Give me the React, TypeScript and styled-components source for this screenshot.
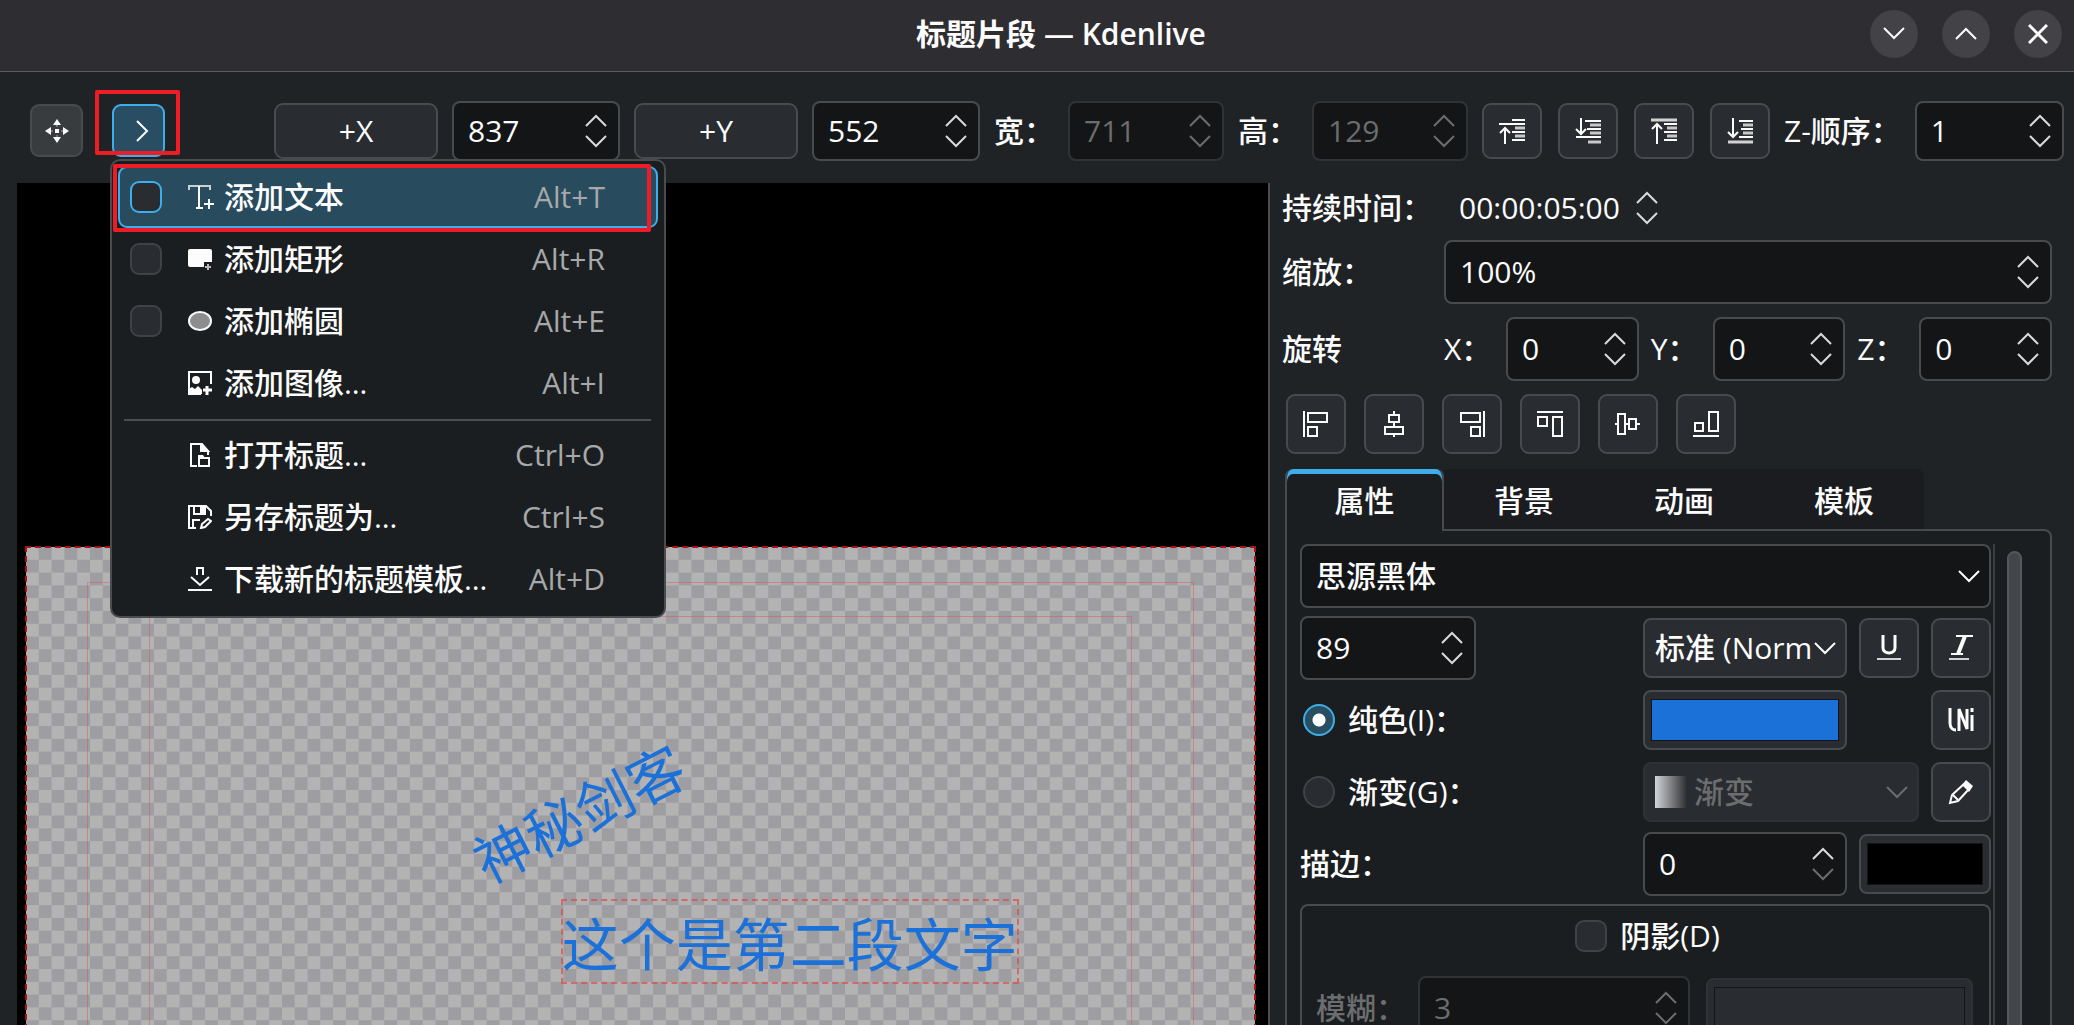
import React from 'react';
import styled, { createGlobalStyle, css } from 'styled-components';

const c = {
  window: '#202326',
  title: '#2e2d32',
  view: '#1b1e20',
  field: '#141517',
  button: '#292c30',
  line: '#484b4e',
  faint: '#303336',
  text: '#fcfcfc',
  dim: '#6b6d6f',
  accent: '#3daee9',
  mark: '#ee1c25',
  ink: '#1c71d8',
};

const GlobalStyle = createGlobalStyle`
  *, *::before, *::after { box-sizing: border-box; }
  body { margin: 0; background: ${c.window}; }
  body, button, input, select {
    font-family: "Open Sans", "Noto Sans CJK SC", sans-serif;
    font-size: 30px;
    line-height: 40px;
    color: ${c.text};
  }
  button, input, select { margin: 0; padding: 0; border: 0; background: none; outline: none; }
`;

/* ---------- window ---------- */

const Window = styled.div`
  display: flex;
  flex-direction: column;
  height: 100vh;
  overflow: hidden;
  background: ${c.window};
`;

const TitleBar = styled.header`
  flex: none;
  display: grid;
  grid-template-columns: 1fr auto 1fr;
  align-items: center;
  height: 72px;
  padding: 0 12px 4px 60px;
  background: ${c.title};
  border-bottom: 1px solid #5c5b60;
`;

const Title = styled.h1`
  grid-column: 2;
  margin: 0;
  font-size: 30px;
  line-height: 40px;
  font-weight: 600;
`;

const WindowButtons = styled.div`
  display: flex;
  justify-content: flex-end;
  gap: 24px;
`;

const RoundButton = styled.button`
  display: grid;
  place-items: center;
  width: 48px;
  height: 48px;
  border-radius: 50%;
  background: #434247;
`;

/* ---------- shared controls ---------- */

const PushButton = styled.button<{ $w?: number; $tall?: boolean }>`
  flex: none;
  display: grid;
  place-items: center;
  width: ${p => (p.$w ? `${p.$w}px` : '100%')};
  height: ${p => (p.$tall ? 60 : 56)}px;
  border: 2px solid ${c.line};
  border-radius: 9px;
  background: ${c.button};
`;

const SpinBox = styled.div<{ $w?: number; $off?: boolean; $short?: boolean }>`
  flex: ${p => (p.$w ? `0 0 ${p.$w}px` : '1 1 0')};
  min-width: 0;
  display: flex;
  align-items: center;
  height: ${p => (p.$short ? 60 : 64)}px;
  padding: 0 11px 0 14px;
  border: 2px solid ${p => (p.$off ? c.faint : c.line)};
  border-radius: 8px;
  background: ${c.field};
  color: ${p => (p.$off ? c.dim : c.text)};
`;

const SpinInput = styled.input`
  flex: 1;
  width: 0;
  min-width: 0;
  height: 40px;
  color: inherit;
  &:disabled { opacity: 1; }
`;

const Steppers = styled.span`
  flex: none;
  display: flex;
  flex-direction: column;
  gap: 8px;
`;

const Step = styled.button<{ $dim?: boolean }>`
  display: block;
  width: 22px;
  height: 13px;
  color: ${p => (p.$dim ? c.dim : '#d9dadb')};
  svg { display: block; }
`;

const Tick = styled.input<{ $hot?: boolean }>`
  appearance: none;
  flex: none;
  width: 32px;
  height: 32px;
  border: 2px solid ${p => (p.$hot ? c.accent : '#404346')};
  border-radius: ${p => (p.type === 'radio' ? '50%' : '9px')};
  background: ${c.button};
  &[type='radio']:checked {
    border-color: ${c.accent};
    background: radial-gradient(circle, #fff 0 6px, #294e62 7px);
  }
`;

const SelectBox = styled.div<{ $dark?: boolean; $off?: boolean; $span?: number }>`
  grid-column: span ${p => p.$span ?? 1};
  display: flex;
  align-items: center;
  height: ${p => (p.$dark ? 64 : 60)}px;
  padding: 0 9px 0 ${p => (p.$dark ? 14 : 10)}px;
  border: 2px solid ${p => (p.$off ? c.faint : c.line)};
  border-radius: 8px;
  background: ${p => (p.$dark ? c.field : c.button)};
  color: ${p => (p.$off ? c.dim : c.text)};
  svg { flex: none; }
`;

const Select = styled.select`
  appearance: none;
  flex: 1;
  width: 0;
  min-width: 0;
  height: 44px;
  color: inherit;
  font-weight: 500;
  &:disabled { opacity: 1; }
`;

const Label = styled.label<{ $w?: number; $off?: boolean }>`
  flex: none;
  width: ${p => (p.$w ? `${p.$w}px` : 'auto')};
  font-weight: 500;
  white-space: nowrap;
  color: ${p => (p.$off ? c.dim : c.text)};
`;

/* ---------- toolbar ---------- */

const Toolbar = styled.div`
  flex: none;
  display: flex;
  align-items: center;
  gap: 14px;
  height: 111px;
  padding: 6px 10px 0 30px;
`;

const ToolGroup = styled.div`
  flex: none;
  display: flex;
  gap: 16px;
`;

const ToolButton = styled.button<{ $active?: boolean }>`
  display: grid;
  place-items: center;
  width: 53px;
  height: 53px;
  border: 2px solid ${p => (p.$active ? c.accent : '#484b4d')};
  border-radius: 9px;
  background: ${p => (p.$active ? '#294e63' : '#393c3f')};
`;

const MenuAnchor = styled.div`
  position: relative;
  flex: none;
  margin: 0 95px 0 15px;
`;

const Highlight = styled.span<{ $inset: string }>`
  position: absolute;
  inset: ${p => p.$inset};
  border: 4px solid ${c.mark};
  border-radius: 2px;
  pointer-events: none;
`;

const Menu = styled.ul`
  position: absolute;
  z-index: 5;
  top: 55px;
  left: -2px;
  width: 556px;
  margin: 0;
  padding: 5px 6px 6px;
  list-style: none;
  border: 2px solid #4a4d50;
  border-radius: 10px;
  background: ${c.view};
`;

const MenuItem = styled.li`
  position: relative;
`;

const itemRow = css<{ $current?: boolean }>`
  display: flex;
  align-items: center;
  width: 100%;
  height: 62px;
  padding: 0 51px 0 10px;
  border: 2px solid ${p => (p.$current ? c.accent : 'transparent')};
  border-radius: 9px;
  background: ${p => (p.$current ? '#284b5e' : 'transparent')};
  text-align: left;
`;
const CheckRow = styled.label<{ $current?: boolean }>`${itemRow}`;
const ActionRow = styled.button<{ $current?: boolean }>`
  ${itemRow}
  padding-left: 42px;
`;

const MenuIcon = styled.span`
  flex: none;
  display: grid;
  width: 24px;
  margin: 0 12px 0 26px;
`;

const MenuText = styled.span`
  flex: 1;
  font-weight: 500;
  white-space: nowrap;
`;

const Shortcut = styled.kbd`
  font-family: inherit;
  color: #a6a8aa;
`;

const Separator = styled.li`
  height: 2px;
  margin: 5px 7px 3px 6px;
  background: #4b4e51;
`;

/* ---------- canvas ---------- */

const Main = styled.main`
  flex: 1;
  min-height: 0;
  display: flex;
  overflow: hidden;
`;

const Stage = styled.section`
  flex: 1;
  min-width: 0;
  margin-left: 17px;
  padding: 364px 13px 0 9px;
  overflow: hidden;
  background: #000;
  border-right: 2px solid #4b4d50;
`;

const Page = styled.div`
  position: relative;
  aspect-ratio: 16 / 9;
  background: repeating-conic-gradient(#9e9da2 0 25%, #b3b3b3 0 50%) 0 0 / calc(100% / 48) calc(100% / 27);
  outline: 2px dashed #a81414;
  outline-offset: -1px;
`;

const SafeArea = styled.div<{ $inset: string }>`
  position: absolute;
  inset: ${p => p.$inset};
  border: 1px solid rgba(214, 90, 90, 0.5);
`;

const TextItem = styled.div<{ $x: string; $y: string; $angle?: number; $selected?: boolean }>`
  position: absolute;
  left: ${p => p.$x};
  top: ${p => p.$y};
  font-family: "Noto Sans CJK SC", sans-serif;
  font-size: 57px;
  line-height: 83px;
  white-space: nowrap;
  color: ${c.ink};
  transform: rotate(${p => p.$angle ?? 0}deg);
  outline: ${p => (p.$selected ? '2px dashed rgba(226, 74, 74, 0.7)' : 'none')};
  outline-offset: -1px;
`;

/* ---------- side panel ---------- */

const Side = styled.aside`
  flex: 0 0 804px;
  display: flex;
  flex-direction: column;
  gap: 13px;
  padding: 0 22px 0 12px;
`;

const Row = styled.div`
  flex: none;
  display: flex;
  align-items: center;
`;

const DurationRow = styled(Row)`
  height: 50px;
  margin-bottom: -6px;
`;

const Timecode = styled.input`
  width: 192px;
  height: 40px;
  padding-left: 15px;
  font-weight: 500;
`;

const Axes = styled.div`
  flex: 1;
  display: grid;
  grid-template-columns: repeat(3, 1fr);
  gap: 12px;
`;

const AlignRow = styled(Row)`
  gap: 18px;
  padding-left: 4px;
`;

const Tabs = styled.div`
  flex: none;
  margin-top: 2px;
  padding-left: 3px;
`;

const TabList = styled.div`
  position: relative;
  display: flex;
  height: 62px;
  margin-bottom: -2px;
`;

const Tab = styled.button<{ $on?: boolean; $last?: boolean }>`
  width: ${p => (p.$on ? 159 : 160)}px;
  height: ${p => (p.$on ? 62 : 60)}px;
  padding-top: ${p => (p.$on ? 2 : 4)}px;
  font-weight: 500;
  background: ${p => (p.$on ? c.view : '#1b1c20')};
  border: solid ${c.line};
  border-width: ${p => (p.$on ? '0 2px 0 2px' : '0')};
  border-radius: ${p => (p.$on ? '8px 8px 0 0' : p.$last ? '0 8px 0 0' : '0')};
  box-shadow: ${p => (p.$on ? `inset 0 5px 0 ${c.accent}` : 'none')};
`;

const TabPanel = styled.div`
  display: flex;
  padding: 13px 28px 0 13px;
  border: 2px solid ${c.line};
  border-radius: 0 8px 8px 8px;
  background: ${c.view};
`;

const Properties = styled.div`
  flex: 1;
  min-width: 0;
  display: flex;
  flex-direction: column;
  gap: 8px;
  padding: 0 2px 24px 0;
  border-right: 2px solid #3c3f42;
`;

const ScrollBar = styled.div`
  width: 15px;
  margin: 7px 0 0 12px;
  border: 2px solid #55585b;
  border-radius: 8px;
  background: #43464a;
`;

const PropRow = styled.div`
  display: grid;
  grid-template-columns: 1fr 204px 60px 60px;
  align-items: center;
  gap: 12px;
  height: 64px;
`;

const Choice = styled.label`
  display: flex;
  align-items: center;
  gap: 13px;
  padding-left: 3px;
  font-weight: 500;
`;

const SizeCell = styled.div`
  display: flex;
  width: 176px;
`;

const ColorButton = styled.button<{ $span?: number; $off?: boolean }>`
  grid-column: span ${p => p.$span ?? 1};
  flex: 1;
  height: 60px;
  padding: 7px 6px;
  border: 2px solid ${p => (p.$off ? c.faint : c.line)};
  border-radius: 8px;
  background: ${c.button};
`;

const Swatch = styled.span<{ $fill: string }>`
  display: block;
  height: 42px;
  border: 1px solid #141517;
  background: ${p => p.$fill};
`;

const GradientChip = styled.span`
  flex: none;
  width: 32px;
  height: 32px;
  margin-right: 7px;
  background: linear-gradient(90deg, #d4d5d8, #2b2d31);
`;

const Group = styled.fieldset`
  min-width: 0;
  margin: 0;
  padding: 0 16px 18px 14px;
  border: 2px solid ${c.line};
  border-radius: 8px;
`;

const GroupTitle = styled.label`
  display: flex;
  justify-content: center;
  align-items: center;
  gap: 13px;
  height: 60px;
  margin-bottom: 10px;
  padding-left: 6px;
  font-weight: 500;
`;

const GroupRow = styled.div`
  display: flex;
  align-items: center;
`;

const GroupGap = styled.span`
  flex: 0 0 16px;
`;

/* ---------- icons ---------- */

const Svg = ({ w = 26, h = 26, sw = 2, children }: { w?: number; h?: number; sw?: number; children: React.ReactNode }) => (
  <svg width={w} height={h} viewBox={`0 0 ${w} ${h}`} fill="none" stroke="currentColor" strokeWidth={sw} aria-hidden="true">
    {children}
  </svg>
);

const Chevron = ({ up }: { up?: boolean }) => (
  <Svg w={22} h={13}>
    <path d={up ? 'M1 12 11 2l10 10' : 'M1 1l10 10L21 1'} />
  </Svg>
);

const orderIcons = {
  raise: (
    <Svg>
      <path d="M13 2h13M0 6h26M13 14h13M13 22h13" />
      <path d="M16 10h10M16 18h10" strokeOpacity=".75" strokeWidth="3" />
      <path d="M6 26V10M1 15l5-5 5 5" />
    </Svg>
  ),
  lower: (
    <Svg>
      <path d="M10 3h16M12 11h14M1 19h25" />
      <path d="M15 7h11M15 15h11M13 24h13" strokeOpacity=".75" strokeWidth="3" />
      <path d="M6 0v16M1 11l5 5 5-5" />
    </Svg>
  ),
  top: (
    <Svg>
      <path d="M0 2h26" strokeWidth="3" strokeOpacity=".8" />
      <path d="M13 6h13M13 14h13M13 22h13" />
      <path d="M16 10h10M16 18h10" strokeOpacity=".75" strokeWidth="3" />
      <path d="M6 26V6M1 11l5-5 5 5" />
    </Svg>
  ),
  bottom: (
    <Svg>
      <path d="M1 24h25" strokeWidth="3" strokeOpacity=".8" />
      <path d="M12 3h14M14 11h12M12 19h14" />
      <path d="M16 7h10M16 15h10" strokeOpacity=".75" strokeWidth="3" />
      <path d="M6 0v19M1 14l5 5 5-5" />
    </Svg>
  ),
};

const alignIcons: [string, React.ReactNode][] = [
  ['左对齐', <Svg><path d="M1 0v26M5 2h19v9H5zM5 16h9v9H5z" /></Svg>],
  ['水平居中', <Svg><path d="M13 0v4M13 11v5M13 23v3M8 4h10v7H8zM4 16h18v7H4z" /></Svg>],
  ['右对齐', <Svg><path d="M25 0v26M2 2h19v9H2zM12 16h9v9h-9z" /></Svg>],
  ['顶对齐', <Svg><path d="M0 1h26M1 6h9v9H1zM16 6h9v19h-9z" /></Svg>],
  ['垂直居中', <Svg><path d="M0 13h3M10 13h4M21 13h4M3 3h7v20H3zM14 8h7v10h-7z" /></Svg>],
  ['底对齐', <Svg><path d="M0 25h26M2 12h8v8H2zM16 1h9v19h-9z" /></Svg>],
];

const MoveIcon = () => (
  <Svg w={24} h={24}>
    <path d="M12 0l4 6H8zM12 24l4-6H8zM0 12l6-4v8zM24 12l-6-4v8z" fill="currentColor" stroke="none" />
    <path d="M10 10h4v4h-4z" fill="currentColor" stroke="none" />
    <path d="M8 12H6M18 12h-2M12 8V6M12 18v-2" strokeOpacity=".3" />
  </Svg>
);

const TextIcon = () => (
  <Svg w={26} h={26}>
    <path d="M1 6V2h21v4" strokeOpacity=".75" />
    <path d="M11 2v22M8 24h7" />
    <path d="M21 15v10M16 20h10" />
  </Svg>
);
const RectIcon = () => (
  <Svg w={24} h={24}>
    <path d="M2 2h20a2 2 0 0 1 2 2v11h-8v5H2a2 2 0 0 1-2-2V4a2 2 0 0 1 2-2z" fill="currentColor" stroke="none" />
    <path d="M20 17v6M17 20h6" strokeOpacity=".7" />
  </Svg>
);
const EllipseIcon = () => (
  <Svg w={24} h={24}>
    <ellipse cx="12" cy="12" rx="11" ry="9" fill="#8c8d8f" />
  </Svg>
);
const ImageIcon = () => (
  <Svg w={24} h={24}>
    <path d="M13 23H1V1h22v12" />
    <circle cx="8" cy="9" r="4" fill="currentColor" stroke="none" />
    <path d="M1 23v-5l3-2 3 2 3-3 4 4v4z" fill="currentColor" stroke="none" />
    <path d="M19 15v9M15 19h9" strokeWidth="3" />
  </Svg>
);
const OpenIcon = () => (
  <Svg w={24} h={24}>
    <path d="M9 23H3V1h11l6 7v4" />
    <path d="M13 1v7h7z" fill="currentColor" />
    <path d="M11 23V15h10v8z" />
    <path d="M10 12h5l2 3h-7z" fill="currentColor" stroke="none" />
  </Svg>
);
const SaveAsIcon = () => (
  <Svg w={24} h={24}>
    <path d="M8 23H1V1h17l5 5v5" />
    <path d="M6 1v8h11V1M5 23v-8h7" />
    <path d="M12 2h4v6h-4z" fill="currentColor" stroke="none" />
    <path d="M13 23l1-4 6-5 3 2-6 6z" />
  </Svg>
);
const DownloadIcon = () => (
  <Svg w={24} h={24}>
    <path d="M9 8V1h6v7M3 10l9 8 9-8M0 23h24" />
  </Svg>
);
const UnderlineIcon = () => (
  <Svg w={26} h={28}>
    <path d="M7 1v13a6 5 0 0 0 12 0V1" strokeWidth="3" />
    <path d="M1 25h24" strokeOpacity=".8" />
  </Svg>
);
const ItalicIcon = () => (
  <Svg w={26} h={28}>
    <path d="M8 2h17M3 20h12" />
    <path d="M17 2 10 20" strokeWidth="4" />
    <path d="M1 25h20" strokeOpacity=".8" />
  </Svg>
);
const PencilIcon = () => (
  <Svg w={26} h={26}>
    <path d="M2 24l2-8L16 5l5 5L10 22z" />
    <path d="M14 6l4-5 7 6-4 6z" fill="currentColor" stroke="none" />
    <path d="M5 16l5 5" />
  </Svg>
);
const UniIcon = () => (
  <Svg w={26} h={26} sw={3}>
    <path d="M2 1v15c0 5 3 7 6 7M11 24V2l8 20V2" />
    <path d="M24 8v16M24 1v4" />
  </Svg>
);

/* ---------- pieces ---------- */

type SpinProps = { id: string; name: string; value: string; w?: number; off?: boolean; short?: boolean; atMin?: boolean };

const Spin = ({ id, name, value, w, off, short, atMin }: SpinProps) => (
  <SpinBox $w={w} $off={off} $short={short}>
    <SpinInput id={id} aria-label={name} defaultValue={value} disabled={off} />
    <Steppers>
      <Step $dim={off} disabled={off} aria-label={`${name} +`}><Chevron up /></Step>
      <Step $dim={off || atMin} disabled={off} aria-label={`${name} -`}><Chevron /></Step>
    </Steppers>
  </SpinBox>
);

const checkItems = [
  { text: '添加文本', keys: 'Alt+T', icon: <TextIcon />, current: true },
  { text: '添加矩形', keys: 'Alt+R', icon: <RectIcon /> },
  { text: '添加椭圆', keys: 'Alt+E', icon: <EllipseIcon /> },
];
const imageItem = { text: '添加图像…', keys: 'Alt+I', icon: <ImageIcon /> };
const fileItems = [
  { text: '打开标题…', keys: 'Ctrl+O', icon: <OpenIcon /> },
  { text: '另存标题为…', keys: 'Ctrl+S', icon: <SaveAsIcon /> },
  { text: '下载新的标题模板…', keys: 'Alt+D', icon: <DownloadIcon /> },
];

const Action = ({ text, keys, icon }: { text: string; keys: string; icon: React.ReactNode }) => (
  <MenuItem>
    <ActionRow>
      <MenuIcon>{icon}</MenuIcon>
      <MenuText>{text}</MenuText>
      <Shortcut>{keys}</Shortcut>
    </ActionRow>
  </MenuItem>
);

const AddMenu = () => (
  <Menu>
    {checkItems.map(item => (
      <MenuItem key={item.text}>
        <CheckRow $current={item.current}>
          <Tick type="checkbox" $hot={item.current} />
          <MenuIcon>{item.icon}</MenuIcon>
          <MenuText>{item.text}</MenuText>
          <Shortcut>{item.keys}</Shortcut>
        </CheckRow>
        {item.current && <Highlight $inset="-2px 7px -4px -5px" />}
      </MenuItem>
    ))}
    <Action {...imageItem} />
    <Separator role="separator" />
    {fileItems.map(item => <Action key={item.text} {...item} />)}
  </Menu>
);

export default function App() {
  return (
    <Window>
      <GlobalStyle />
      <TitleBar>
        <Title>标题片段 — Kdenlive</Title>
        <WindowButtons>
          <RoundButton aria-label="最小化"><Chevron /></RoundButton>
          <RoundButton aria-label="最大化"><Chevron up /></RoundButton>
          <RoundButton aria-label="关闭"><Svg w={20} h={20} sw={3}><path d="M1 1l18 18M19 1 1 19" /></Svg></RoundButton>
        </WindowButtons>
      </TitleBar>

      <Toolbar>
        <ToolButton aria-label="选择工具"><MoveIcon /></ToolButton>
        <MenuAnchor>
          <ToolButton $active aria-label="更多"><Svg w={20} h={22}><path d="M8 1l10 10L8 21" /></Svg></ToolButton>
          <Highlight $inset="-14px -15px 2px -17px" />
          <AddMenu />
        </MenuAnchor>
        <PushButton $w={164}>+X</PushButton>
        <Spin id="pos-x" name="X" value="837" w={168} short />
        <PushButton $w={164}>+Y</PushButton>
        <Spin id="pos-y" name="Y" value="552" w={168} short />
        <Label htmlFor="width">宽：</Label>
        <Spin id="width" name="宽" value="711" w={156} off short />
        <Label htmlFor="height">高：</Label>
        <Spin id="height" name="高" value="129" w={156} off short />
        <ToolGroup>
          <PushButton $w={60} aria-label="上移一层">{orderIcons.raise}</PushButton>
          <PushButton $w={60} aria-label="下移一层">{orderIcons.lower}</PushButton>
          <PushButton $w={60} aria-label="移到顶层">{orderIcons.top}</PushButton>
          <PushButton $w={60} aria-label="移到底层">{orderIcons.bottom}</PushButton>
        </ToolGroup>
        <Label htmlFor="z-order">Z-顺序：</Label>
        <Spin id="z-order" name="Z-顺序" value="1" short />
      </Toolbar>

      <Main>
        <Stage>
          <Page>
            <SafeArea $inset="5%" />
            <SafeArea $inset="10%" />
            <TextItem $x="35.6%" $y="32.2%" $angle={-27}>神秘剑客</TextItem>
            <TextItem $x="43.6%" $y="51%" $selected>这个是第二段文字</TextItem>
          </Page>
        </Stage>

        <Side>
          <DurationRow>
            <Label htmlFor="duration" $w={162}>持续时间：</Label>
            <Timecode id="duration" defaultValue="00:00:05:00" />
            <Steppers>
              <Step aria-label="增加"><Chevron up /></Step>
              <Step aria-label="减少"><Chevron /></Step>
            </Steppers>
          </DurationRow>
          <Row>
            <Label htmlFor="zoom" $w={162}>缩放：</Label>
            <Spin id="zoom" name="缩放" value="100%" />
          </Row>
          <Row>
            <Label as="span" $w={162}>旋转</Label>
            <Axes>
              {['X', 'Y', 'Z'].map(axis => (
                <Row key={axis}>
                  <Label htmlFor={`rot-${axis}`} $w={62}>{axis}：</Label>
                  <Spin id={`rot-${axis}`} name={axis} value="0" />
                </Row>
              ))}
            </Axes>
          </Row>
          <AlignRow>
            {alignIcons.map(([name, icon]) => (
              <PushButton key={name} $w={60} $tall aria-label={name}>{icon}</PushButton>
            ))}
          </AlignRow>

          <Tabs>
            <TabList role="tablist">
              <Tab role="tab" aria-selected $on>属性</Tab>
              <Tab role="tab">背景</Tab>
              <Tab role="tab">动画</Tab>
              <Tab role="tab" $last>模板</Tab>
            </TabList>
            <TabPanel role="tabpanel">
              <Properties>
                <SelectBox $dark>
                  <Select aria-label="字体"><option>思源黑体</option></Select>
                  <Chevron />
                </SelectBox>
                <PropRow>
                  <SizeCell><Spin id="size" name="字号" value="89" /></SizeCell>
                  <SelectBox>
                    <Select aria-label="字重"><option>标准 (Norm</option></Select>
                    <Chevron />
                  </SelectBox>
                  <PushButton $tall aria-label="下划线"><UnderlineIcon /></PushButton>
                  <PushButton $tall aria-label="斜体"><ItalicIcon /></PushButton>
                </PropRow>
                <PropRow>
                  <Choice><Tick type="radio" name="fill" defaultChecked />纯色(I)：</Choice>
                  <ColorButton aria-label="文字颜色"><Swatch $fill={c.ink} /></ColorButton>
                  <span />
                  <PushButton $tall aria-label="插入 Unicode 字符"><UniIcon /></PushButton>
                </PropRow>
                <PropRow>
                  <Choice><Tick type="radio" name="fill" />渐变(G)：</Choice>
                  <SelectBox $off $span={2}>
                    <GradientChip />
                    <Select aria-label="渐变" disabled><option>渐变</option></Select>
                    <Chevron />
                  </SelectBox>
                  <PushButton $tall aria-label="编辑渐变"><PencilIcon /></PushButton>
                </PropRow>
                <PropRow>
                  <Label htmlFor="outline">描边：</Label>
                  <Spin id="outline" name="描边" value="0" atMin />
                  <ColorButton $span={2} aria-label="描边颜色"><Swatch $fill="#000" /></ColorButton>
                </PropRow>
                <Group>
                  <GroupTitle><Tick type="checkbox" />阴影(D)</GroupTitle>
                  <GroupRow>
                    <Label htmlFor="blur" $w={102} $off>模糊：</Label>
                    <Spin id="blur" name="模糊" value="3" w={272} off />
                    <GroupGap />
                    <ColorButton $off disabled aria-label="阴影颜色"><Swatch $fill={c.button} /></ColorButton>
                  </GroupRow>
                </Group>
              </Properties>
              <ScrollBar />
            </TabPanel>
          </Tabs>
        </Side>
      </Main>
    </Window>
  );
}
